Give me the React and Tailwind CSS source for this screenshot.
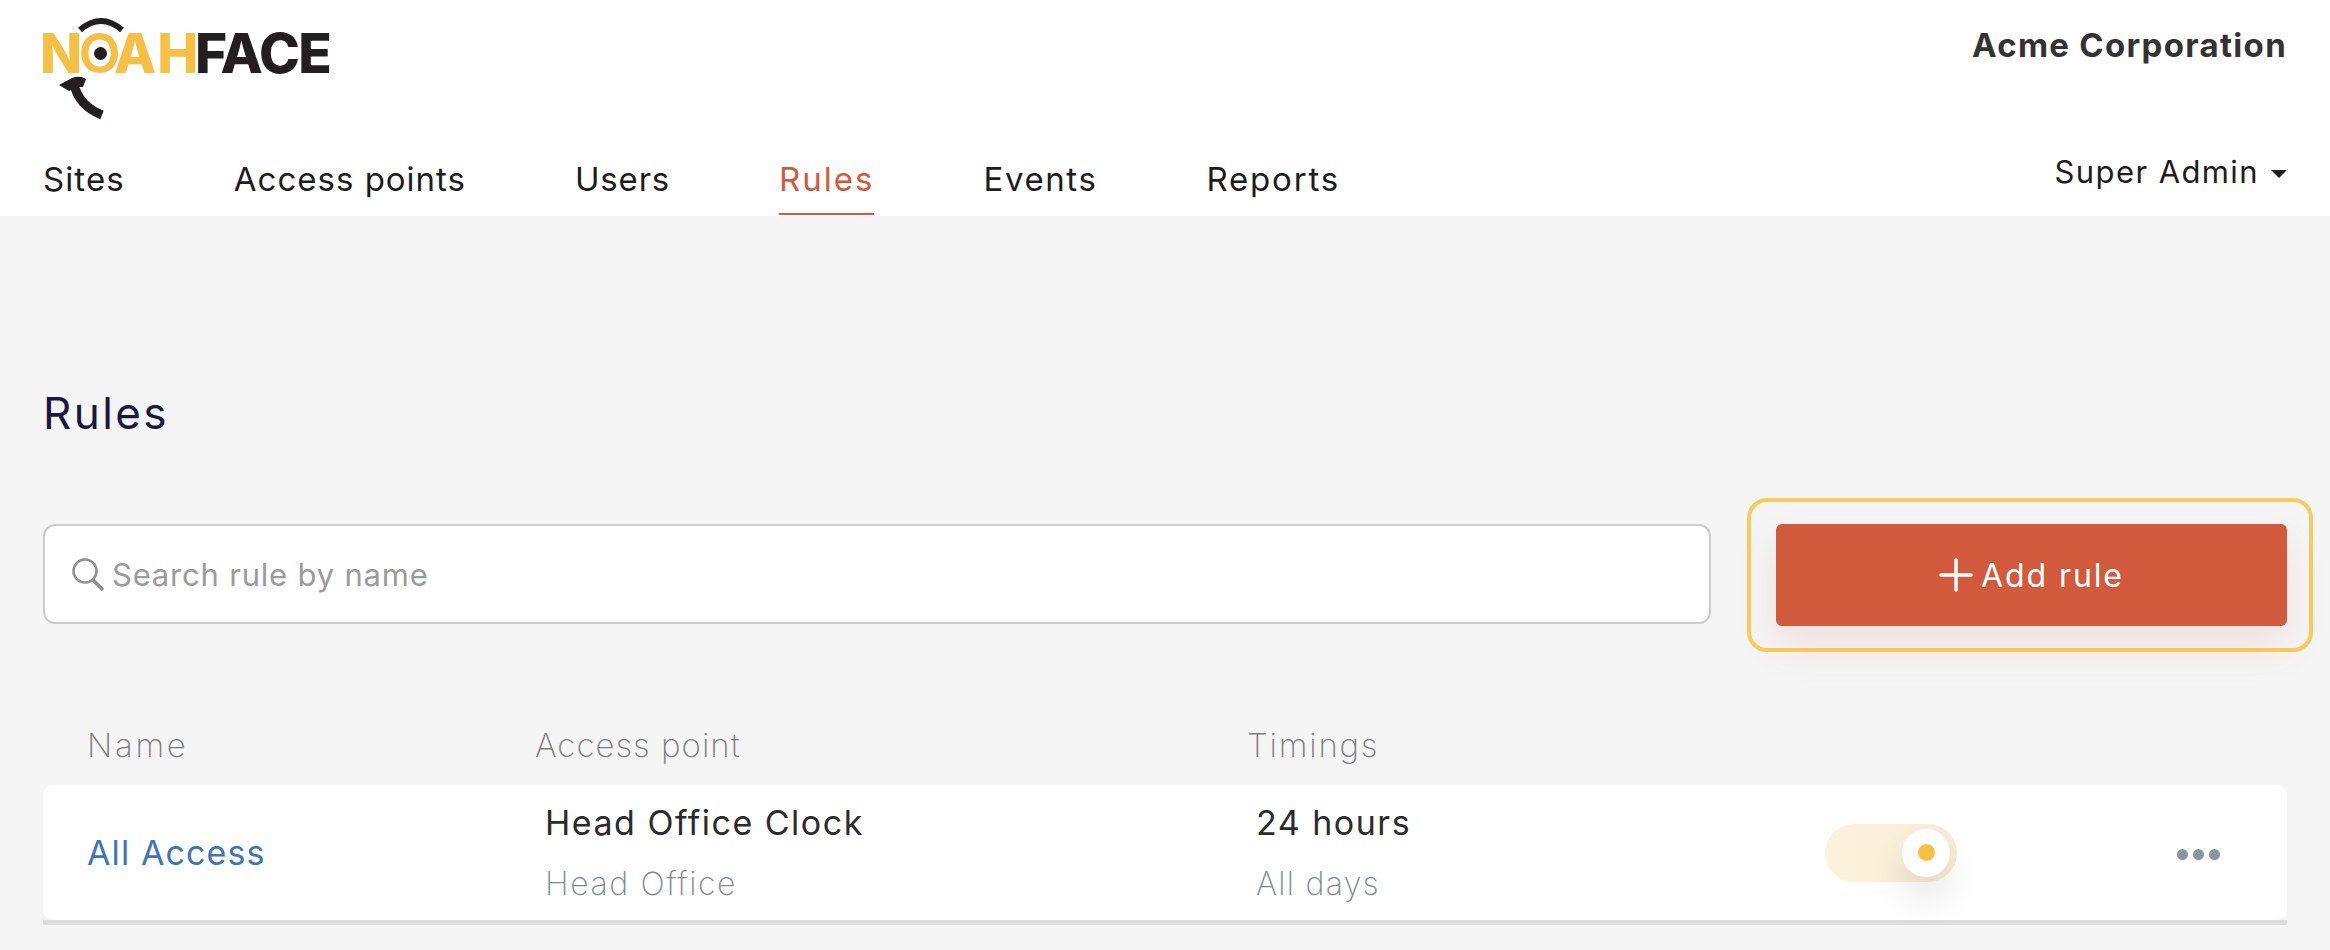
const navItems = [
  { label: 'Sites', className: 'tracking-[1.1px]' },
  { label: 'Access points', className: 'tracking-[1px]' },
  { label: 'Users', className: 'tracking-[0.8px]' },
  { label: 'Rules', className: 'tracking-[2px]' },
  { label: 'Events', className: 'tracking-[1.6px]' },
  { label: 'Reports', className: 'tracking-[1.8px]' },
];

function Logo() {
  return (
    <div className="relative h-[120px] w-[300px] shrink-0">
      <svg className="absolute left-0 top-0" width="300" height="120" viewBox="43 0 300 120" fill="none">
        <path d="M80 30 Q101 12 122 30" stroke="#231f20" strokeWidth="6" />
        <path d="M74 84 C77 98 87 109 102 115" stroke="#231f20" strokeWidth="9" />
        <path d="M59 85 L72 78 Q80 75 86 79 L83 87 L77 87 L69 91 Z" fill="#231f20" />
      </svg>
      <div className="absolute -left-[3px] top-[20px] text-[55px] leading-[66px] font-extrabold font-['Inter'] text-[#f5c044] whitespace-nowrap">
        <span className="tracking-[-3.5px]">N</span>
        <span className="tracking-[-7px] font-semibold">O</span>
        <span className="tracking-[1px]">A</span>
        <span className="tracking-[-3.5px]">H</span>
        <span className="tracking-[-1.5px] text-[#231f20]">FACE</span>
      </div>
      <div className="absolute left-[51px] top-[47px] w-[13px] h-[13px] rounded-full bg-[#231f20]"></div>
    </div>
  );
}

export default function App() {
  return (
    <div className="min-h-[950px] bg-[#f5f5f5] font-['Inter',sans-serif]">
      <header className="h-[216px] bg-white px-[43px] flex justify-between">
        <div className="flex flex-col justify-between">
          <Logo />
          <nav className="flex gap-[109px] text-[33px] leading-[40px] text-[#1c1c1c]">
            {navItems.map((item) => (
              <a
                key={item.label}
                className={
                  item.label === 'Rules'
                    ? `${item.className} pb-[14px] mb-[1px] border-b-2 border-[#d15a3c] text-[#d15a3c]`
                    : `${item.className} pb-[17px]`
                }
              >
                {item.label}
              </a>
            ))}
          </nav>
        </div>
        <div className="flex flex-col items-end">
          <div className="mt-[25px] text-[33px] leading-[40px] font-bold text-[#333333] tracking-[1.3px]">Acme Corporation</div>
          <div className="mt-[87px] flex items-center gap-[12px] text-[31px] leading-[40px] text-[#1c1c1c] tracking-[1.4px]">
            Super Admin
            <span className="mt-[4px] w-0 h-0 border-x-[8px] border-x-transparent border-t-[8px] border-t-[#1c1c1c]"></span>
          </div>
        </div>
      </header>

      <main className="px-[43px]">
        <h1 className="mt-[172px] text-[44px] leading-[50px] text-[#1a1740] tracking-[2.4px]">Rules</h1>

        <div className="mt-[86px] flex items-start gap-[65px]">
          <div className="flex-1 h-[100px] bg-white border-2 border-[#cccccc] rounded-[12px] pl-[27px] flex items-center gap-[8px]">
            <svg width="32" height="33" viewBox="0 0 32 33" fill="none" stroke="#8e8e8e" className="shrink-0">
              <circle cx="13" cy="13" r="11.5" strokeWidth="2.5" />
              <path d="M21 22 L31 32" strokeWidth="3.5" />
            </svg>
            <input
              placeholder="Search rule by name"
              className="flex-1 mt-[2px] outline-none bg-transparent text-[31px] tracking-[0.8px] text-[#333] placeholder:text-[#9b9b9b]"
            />
          </div>
          <div className="relative w-[511px] shrink-0">
            <div className="absolute -left-[29px] -right-[26px] -top-[26px] -bottom-[26px] border-4 border-[#f8cc5c] rounded-[20px]"></div>
            <button className="relative w-full h-[102px] bg-[#d15a3c] rounded-[6px] text-white text-[32px] tracking-[1.9px] flex items-center justify-center gap-[8px] shadow-[0_20px_40px_rgba(209,90,60,0.12)]">
              <svg width="34" height="34" viewBox="0 0 34 34" fill="none" stroke="white" strokeWidth="3.5" strokeLinecap="round">
                <path d="M17 2V32M2 17H32" />
              </svg>
              <span className="mt-[2px]">Add rule</span>
            </button>
          </div>
        </div>

        <div className="mt-[99px] flex text-[33px] leading-[40px] font-extralight text-[#7d7d7d]">
          <div className="w-[492px] pl-[44px] tracking-[2.7px]">Name</div>
          <div className="w-[712px] tracking-[1px]">Access point</div>
          <div className="tracking-[1.8px]">Timings</div>
        </div>

        <div className="mt-[20px] h-[140px] rounded-b-[2px] border-b-[5px] border-[#dcdcdc]">
          <div className="h-full bg-white rounded-[10px] flex items-center">
            <a className="w-[502px] pl-[44px] text-[34px] text-[#3f75b5] tracking-[1.1px]">All Access</a>
            <div className="w-[711px] flex flex-col gap-[20px]">
              <div className="text-[34px] leading-[42px] text-[#2b2b2b] tracking-[1.5px]">Head Office Clock</div>
              <div className="text-[32px] leading-[40px] font-extralight text-[#7f8a94] tracking-[1.6px]">Head Office</div>
            </div>
            <div className="w-[569px] flex flex-col gap-[20px]">
              <div className="text-[34px] leading-[42px] text-[#2b2b2b] tracking-[1.5px]">24 hours</div>
              <div className="text-[32px] leading-[40px] font-extralight text-[#7f8a94] tracking-[1.3px]">All days</div>
            </div>
            <div className="w-[352px] flex items-center">
              <div className="w-[132px] h-[58px] rounded-full bg-gradient-to-r from-[#fdf3dc] to-[#f6ebd5] flex items-center justify-end pr-[7px]">
                <div className="w-[48px] h-[48px] rounded-full bg-white flex items-center justify-center shadow-[0_24px_36px_rgba(0,0,0,0.1)]">
                  <div className="w-[17px] h-[17px] rounded-full bg-[#f5c044]"></div>
                </div>
              </div>
            </div>
            <div className="flex gap-[5px] mt-[3px]">
              <span className="w-[11px] h-[11px] rounded-full bg-[#8b959e]"></span>
              <span className="w-[11px] h-[11px] rounded-full bg-[#8b959e]"></span>
              <span className="w-[11px] h-[11px] rounded-full bg-[#8b959e]"></span>
            </div>
          </div>
        </div>
      </main>
    </div>
  );
}
